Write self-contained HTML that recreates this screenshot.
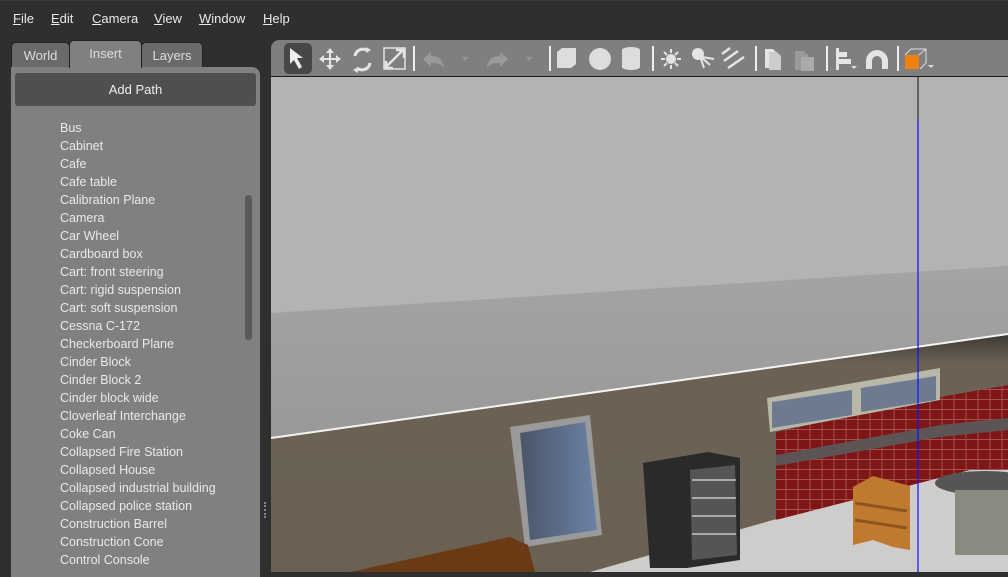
<!DOCTYPE html>
<html><head><meta charset="utf-8"><style>
*{margin:0;padding:0;box-sizing:border-box}
body{width:1008px;height:572px;overflow:hidden;background:#2f2f2f;font-family:"Liberation Sans","DejaVu Sans",sans-serif;position:relative}
.menu{position:absolute;top:0;left:0;width:1008px;height:35px;background:#2f2f2f;border-top:1px solid #3a3a3a}
.menu span{position:absolute;top:10px;color:#eaeaea;font-size:13px}
.menu span u{text-decoration:underline}
.tab{position:absolute;top:42px;height:26px;color:#ddd;font-size:13px;text-align:center;line-height:26px;border:1px solid #222;border-bottom:none;border-radius:5px 5px 0 0;background:#6a6a6a}
.panel{position:absolute;left:11px;top:67px;width:249px;height:510px;background:#808080;border-radius:0 8px 0 0}
.btn{position:absolute;left:15px;top:73px;width:241px;height:33px;background:#4f4f4f;border-radius:3px;color:#eee;font-size:13px;text-align:center;line-height:33px}
.list{position:absolute;left:60px;top:119px;color:#e9e9e9;font-size:12.5px;line-height:18px}
.sb{position:absolute;left:245px;top:195px;width:7px;height:145px;background:#5a5a5a;border-radius:3px}
.tb{position:absolute;left:271px;top:40px;width:737px;height:37px;background:#7f7f7f;border-radius:8px 0 0 0;border-bottom:1px solid #1a1a1a}
</style></head><body>
<div class="menu">
<span style="left:13px"><u>F</u>ile</span><span style="left:51px"><u>E</u>dit</span><span style="left:92px"><u>C</u>amera</span><span style="left:154px"><u>V</u>iew</span><span style="left:199px"><u>W</u>indow</span><span style="left:263px"><u>H</u>elp</span>
</div>
<div class="tab" style="left:11px;width:59px">World</div>
<div class="tab" style="left:69px;width:73px;background:#808080;top:40px;height:28px;border-bottom:none;z-index:2">Insert</div>
<div class="tab" style="left:141px;width:62px">Layers</div>
<div class="panel"></div>
<div class="btn">Add Path</div>
<div class="sb"></div>
<div style="position:absolute;left:264px;top:502px;width:3px;height:16px;border-left:2px dotted #888"></div>
<div class="list">Bus<br>Cabinet<br>Cafe<br>Cafe table<br>Calibration Plane<br>Camera<br>Car Wheel<br>Cardboard box<br>Cart: front steering<br>Cart: rigid suspension<br>Cart: soft suspension<br>Cessna C-172<br>Checkerboard Plane<br>Cinder Block<br>Cinder Block 2<br>Cinder block wide<br>Cloverleaf Interchange<br>Coke Can<br>Collapsed Fire Station<br>Collapsed House<br>Collapsed industrial building<br>Collapsed police station<br>Construction Barrel<br>Construction Cone<br>Control Console</div>

<div class="tb">
<svg width="737" height="37" viewBox="271 40 737 37" style="position:absolute;left:0;top:0">
<rect x="284" y="43" width="28" height="31" rx="5" fill="#474747"/>
<path d="M290 48 L290 64 L294 60 L299 69 L302 67 L297 58 L303 58 Z" fill="#eee"/>
<g fill="#e4e4e4"><path d="M330 48l4 5h-3v5h5v-3l5 4-5 4v-3h-5v5h3l-4 5-4-5h3v-5h-5v3l-5-4 5-4v3h5v-5h-3z"/></g>
<g fill="none" stroke="#e4e4e4" stroke-width="3"><path d="M355 56a8 8 0 0 1 13-5"/><path d="M370 63a8 8 0 0 1-13 5"/></g>
<path d="M366 47l5 3-5 3zM358 73l-5-3 5-3z" fill="#e4e4e4"/>
<g stroke="#e4e4e4" stroke-width="2.5" fill="none"><rect x="384" y="48" width="21" height="21" stroke-width="1.5"/><path d="M387 66l15-15M396 50h8v8M386 61v7h7"/></g>
<rect x="413" y="46" width="2" height="25" fill="#eee"/>
<path d="M423 59l8-7v4c8 0 12 4 13 12-3-4-6-5-13-5v4z" fill="#9a9a9a"/>
<path d="M462 57h6l-3 4z M526 57h6l-3 4z" fill="#9a9a9a"/>
<path d="M508 59l-8-7v4c-8 0-12 4-13 12 3-4 6-5 13-5v4z" fill="#9a9a9a"/>
<rect x="549" y="46" width="2" height="25" fill="#eee"/>
<path d="M557 52l5-4h14v16l-5 4h-14z" fill="#ddd"/>
<circle cx="600" cy="59" r="11" fill="#ddd"/>
<path d="M622 50v17a9 3 0 0 0 18 0v-17a9 3 0 0 0-18 0z" fill="#ddd"/>
<rect x="652" y="46" width="2" height="25" fill="#eee"/>
<circle cx="671" cy="59" r="5" fill="#e4e4e4"/>
<g stroke="#e4e4e4" stroke-width="2"><path d="M671 49v4M671 65v4M661 59h4M677 59h4M664 52l3 3M675 63l3 3M664 66l3-3M675 55l3-3"/></g>
<circle cx="698" cy="54" r="6" fill="#e4e4e4"/><g stroke="#e4e4e4" stroke-width="2"><path d="M702 57l12 2M702 58l8 7M701 59l3 9"/></g>
<g stroke="#e4e4e4" stroke-width="2.5"><path d="M724 61l14-10M728 68l16-11M722 54l8-6"/></g>
<rect x="755" y="46" width="2" height="25" fill="#eee"/>
<path d="M765 49h8l4 4v15h-12z" fill="#e4e4e4"/><path d="M769 52h8l4 4v14h-12z" fill="#ccc"/>
<path d="M795 51h10v3h3v16h-13z" fill="#9a9a9a"/><path d="M801 57h13v14h-13z" fill="#aaa"/>
<rect x="826" y="46" width="2" height="25" fill="#eee"/>
<path d="M836 48v22h3v-22zM839 52h8v5h-8zM839 59h12v5h-12z" fill="#e4e4e4"/><path d="M851 66h6l-3 3z" fill="#ddd"/>
<path d="M866 69v-8a11 11 0 0 1 22 0v8h-6v-8a5 5 0 0 0-10 0v8z" fill="#e4e4e4"/>
<rect x="897" y="46" width="2" height="25" fill="#eee"/>
<rect x="905" y="55" width="14" height="14" fill="#f08010"/>
<path d="M905 55l6-6h15v14l-6 6M919 55l7-6" stroke="#ddd" fill="none"/>
<path d="M928 65h6l-3 3z" fill="#ddd"/>
</svg>
</div>

<svg width="737" height="495" viewBox="271 77 737 495" style="position:absolute;left:271px;top:77px">
<defs>
<linearGradient id="wall" x1="0" y1="0" x2="0" y2="1"><stop offset="0" stop-color="#3e3a33"/><stop offset=".12" stop-color="#6b6255"/><stop offset="1" stop-color="#6a6153"/></linearGradient>
<linearGradient id="roof" x1="0" y1="0" x2="0" y2="1"><stop offset="0" stop-color="#a4a4a4"/><stop offset="1" stop-color="#999"/></linearGradient>
<linearGradient id="glass" x1="0" y1="0" x2="1" y2="0"><stop offset="0" stop-color="#4a5568"/><stop offset="1" stop-color="#6c82a6"/></linearGradient>
<pattern id="brick" width="12" height="10" patternUnits="userSpaceOnUse"><rect width="12" height="10" fill="#7e1616"/><path d="M0 9.5h12M6 0v10" stroke="#a55050" stroke-width="1"/></pattern>
</defs>
<rect x="271" y="77" width="737" height="495" fill="#b3b3b3"/>
<polygon points="271,313 1008,266 1008,335 271,438" fill="url(#roof)"/>
<polygon points="271,438 1008,335 1008,572 271,572" fill="url(#wall)"/>
<line x1="271" y1="438" x2="1008" y2="334" stroke="#f4f4f4" stroke-width="2"/>
<polygon points="590,572 773,520 970,470 1008,460 1008,572" fill="#cfcccc"/>
<polygon points="776,432 940,397 1008,385 1008,470 970,470 776,520" fill="url(#brick)"/>
<polygon points="776,455 940,425 1008,418 1008,430 940,437 776,466" fill="#5d5555"/>
<polygon points="767,398 940,368 940,400 770,432" fill="#b8b8a8"/>
<polygon points="772,402 852,390 852,415 772,428" fill="#6d7a90"/>
<polygon points="861,388 936,376 936,400 861,412" fill="#6d7a90"/>
<polygon points="510,427 590,415 602,535 525,547" fill="#9a9a9a"/>
<polygon points="520,433 585,422 597,530 530,540" fill="url(#glass)"/>
<polygon points="643,463 708,452 740,458 740,560 687,568 650,568" fill="#2a2a2a"/>
<polygon points="690,470 735,465 737,555 692,560" fill="#555"/>
<g stroke="#aaa" stroke-width="2"><path d="M692 480h44M692 498h44M692 516h44M692 534h44"/></g>
<polygon points="853,487 873,476 910,486 910,550 893,547 873,540 853,545" fill="#c07a30"/>
<path d="M855 503l52 8M855 520l52 8" stroke="#8a5520" stroke-width="3"/>
<ellipse cx="985" cy="483" rx="50" ry="12" fill="#555"/>
<rect x="955" y="490" width="53" height="65" fill="#8a8a80"/>
<polygon points="350,572 510,537 528,545 535,572" fill="#6a3a15"/>
<line x1="918" y1="77" x2="918" y2="120" stroke="#111" stroke-width="1"/>
<line x1="918" y1="120" x2="918" y2="572" stroke="#1010ff" stroke-width="1.2"/>
</svg>
</body></html>
